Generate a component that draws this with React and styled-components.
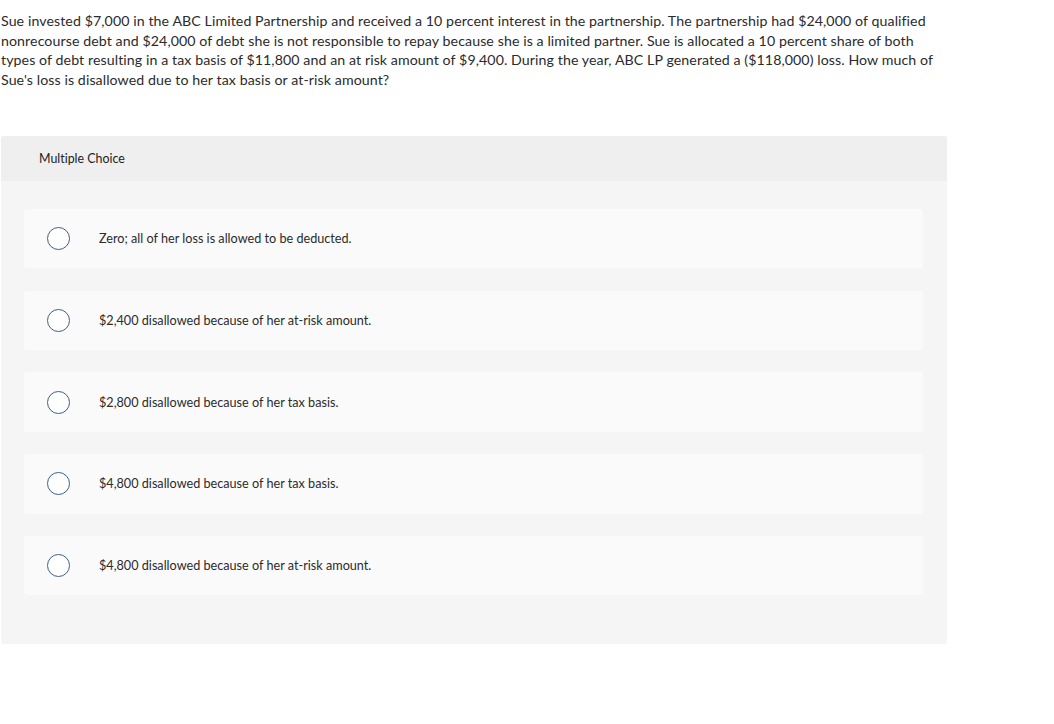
import React from 'react';
import styled, { createGlobalStyle } from 'styled-components';

const GlobalStyle = createGlobalStyle`
  body {
    margin: 0;
    background: #fff;
    font-family: Lato, "Open Sans", sans-serif;
    font-variant-ligatures: none;
    color: #333;
  }
`;

const questionLines = [
  'Sue invested $7,000 in the ABC Limited Partnership and received a 10 percent interest in the partnership. The partnership had $24,000 of qualified',
  'nonrecourse debt and $24,000 of debt she is not responsible to repay because she is a limited partner. Sue is allocated a 10 percent share of both',
  'types of debt resulting in a tax basis of $11,800 and an at risk amount of $9,400. During the year, ABC LP generated a ($118,000) loss. How much of',
  "Sue's loss is disallowed due to her tax basis or at-risk amount?"
];

const choices = [
  'Zero; all of her loss is allowed to be deducted.',
  '$2,400 disallowed because of her at-risk amount.',
  '$2,800 disallowed because of her tax basis.',
  '$4,800 disallowed because of her tax basis.',
  '$4,800 disallowed because of her at-risk amount.'
];

const App = () => (
  <Page>
    <GlobalStyle />
    <Question>
      {questionLines.map((l, i) => (
        <Line key={i}>{l}</Line>
      ))}
    </Question>
    <Panel>
      <Header>Multiple Choice</Header>
      <Options>
        {choices.map((c, i) => (
          <Option key={i}>
            <Radio />
            <Label>{c}</Label>
          </Option>
        ))}
      </Options>
    </Panel>
  </Page>
);

const Page = styled.div`
  padding: 11px 0 0 1px;
`;

const Question = styled.p`
  margin: 0;
  font-size: 14.2px;
  letter-spacing: 0.08px;
  line-height: 19.7px;
  color: #2b2b2b;
`;

const Line = styled.span`
  display: block;
  white-space: nowrap;
`;

const Panel = styled.div`
  margin-top: 46px;
  width: 946px;
  background: #f5f5f5;
  border-radius: 3px;
  overflow: hidden;
`;

const Header = styled.div`
  height: 45px;
  display: flex;
  align-items: center;
  padding-left: 38px;
  background: #efefef;
  font-size: 12.4px;
  color: #222;
`;

const Options = styled.div`
  display: flex;
  flex-direction: column;
  gap: 22.25px;
  padding: 28px 24px 49px 23px;
`;

const Option = styled.div`
  height: 59.5px;
  display: flex;
  align-items: center;
  background: #fafafa;
  border-radius: 3px;
  padding-left: 23px;
`;

const Radio = styled.span`
  width: 23px;
  height: 23px;
  box-sizing: border-box;
  border: 1.5px solid #3a6189;
  border-radius: 50%;
  background: #fff;
  flex-shrink: 0;
`;

const Label = styled.span`
  margin-left: 29px;
  font-size: 12.65px;
  color: #2b2b2b;
`;

export default App;
